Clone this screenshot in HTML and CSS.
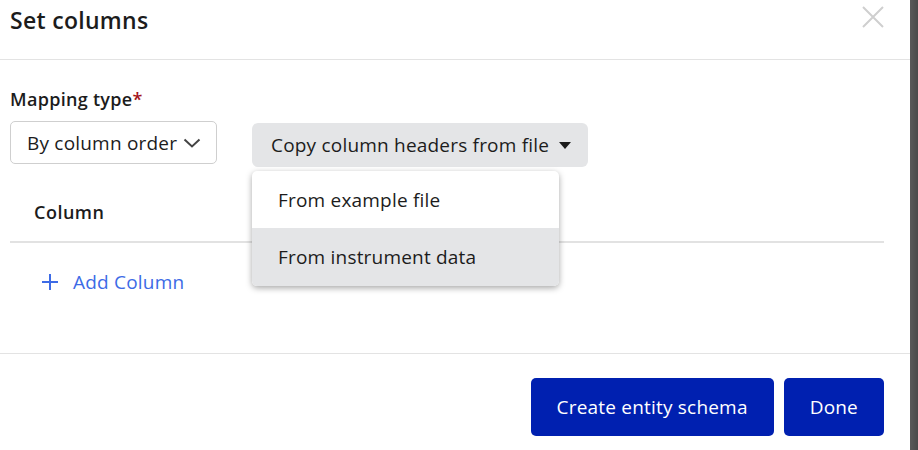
FILE: index.html
```html
<!DOCTYPE html>
<html lang="en">
<head>
<meta charset="UTF-8">
<meta name="viewport" content="width=device-width, initial-scale=1.0">
<title>Set columns</title>
<link rel="stylesheet" href="styles.css">
</head>
<body>

<div class="page">
  <div class="dialog">
    <div class="dialog-header">
      <h1>Set columns</h1>
      <button class="close" aria-label="Close">
        <svg width="22" height="22" viewBox="0 0 22 22"><path d="M1 1L21 21M21 1L1 21" stroke="#cfcfcf" stroke-width="2" fill="none"/></svg>
      </button>
    </div>

    <div class="dialog-body">
      <label class="field-label">Mapping type<span class="req">*</span></label>
      <div class="controls">
        <div class="select">
          By column order
          <svg width="18" height="10" viewBox="0 0 18 10"><path d="M1.5 1.5L9 8.5L16.5 1.5" stroke="#444" stroke-width="2" fill="none"/></svg>
        </div>
        <div class="copy-wrap">
          <button class="copy-btn">Copy column headers from file <span class="caret"></span></button>
          <ul class="menu">
            <li>From example file</li>
            <li class="active">From instrument data</li>
          </ul>
        </div>
      </div>

      <div class="table-head">Column</div>

      <button class="add-col">
        <svg width="18" height="18" viewBox="0 0 18 18"><path d="M9 1V17M1 9H17" stroke="#3d6be6" stroke-width="2" fill="none"/></svg>
        Add Column
      </button>
    </div>

    <div class="dialog-footer">
      <button class="primary">Create entity schema</button>
      <button class="primary">Done</button>
    </div>
  </div>
  <div class="overlay"></div>
</div>

</body>
</html>
```

FILE: styles.css
```css
body {
  margin: 0;
  font-family: "Open Sans", "Lato", sans-serif;
  color: #1c1c1c;
  background-color: #fff;
  letter-spacing: 0.2px;
}

.page {
  display: flex;
  height: 450px;
  overflow: hidden;
}

.dialog {
  width: 910px;
  background-color: #fff;
  display: flex;
  flex-direction: column;
}

.overlay {
  flex: 1;
  background: linear-gradient(to right, #5a5a5a, #4a4a4a);
}

.dialog-header {
  height: 59px;
  border-bottom: 1px solid #e3e3e3;
  display: flex;
  justify-content: space-between;
  align-items: flex-start;
  padding: 0 26px 0 10px;
}

.dialog-header h1 {
  margin: 4px 0 0;
  font-size: 23px;
  font-weight: 600;
  line-height: 32px;
  letter-spacing: 0.3px;
}

.close {
  border: none;
  background: none;
  padding: 0;
  margin-top: 6px;
  cursor: pointer;
}

.dialog-body {
  height: 293px;
  padding: 0 26px 0 10px;
}

.field-label {
  display: block;
  margin-top: 28px;
  font-size: 18px;
  font-weight: 600;
  line-height: 23px;
  letter-spacing: 0.3px;
}

.req {
  color: #a3131a;
}

.controls {
  display: flex;
  align-items: flex-start;
  gap: 35px;
  margin-top: 10px;
}

.select {
  width: 207px;
  height: 43px;
  box-sizing: border-box;
  border: 1px solid #cfcfcf;
  border-radius: 5px;
  padding: 0 15px 0 16px;
  display: flex;
  align-items: center;
  justify-content: space-between;
  font-size: 19px;
}

.copy-wrap {
  position: relative;
  margin-top: 2px;
}

.copy-btn {
  height: 44px;
  border: none;
  border-radius: 6px;
  background-color: #e4e5e7;
  font-family: inherit;
  font-size: 19px;
  letter-spacing: inherit;
  color: #1c1c1c;
  padding: 0 17px 0 19px;
  display: flex;
  align-items: center;
}

.caret {
  width: 0;
  height: 0;
  margin-left: 10px;
  border-left: 6px solid transparent;
  border-right: 6px solid transparent;
  border-top: 7px solid #1c1c1c;
}

.menu {
  position: absolute;
  top: 48px;
  left: 0;
  width: 307px;
  margin: 0;
  padding: 0;
  list-style: none;
  background-color: #fff;
  border-radius: 5px;
  box-shadow: 0 2px 6px rgba(0, 0, 0, 0.35);
  overflow: hidden;
  z-index: 2;
}

.menu li {
  height: 57px;
  display: flex;
  align-items: center;
  padding-left: 26px;
  font-size: 19px;
}

.menu li.active {
  height: 58px;
  background-color: #e4e5e7;
}

.table-head {
  margin-top: 24px;
  height: 50px;
  padding-left: 24px;
  border-bottom: 2px solid #e2e2e2;
  font-size: 18px;
  font-weight: 600;
  line-height: 42px;
  letter-spacing: 0.5px;
}

.add-col {
  margin-top: 26px;
  margin-left: 31px;
  display: flex;
  align-items: center;
  gap: 14px;
  border: none;
  background: none;
  padding: 0;
  font-family: inherit;
  font-size: 19px;
  letter-spacing: inherit;
  color: #3d6be6;
  cursor: pointer;
}

.dialog-footer {
  border-top: 1px solid #e3e3e3;
  display: flex;
  justify-content: flex-end;
  gap: 10px;
  padding: 24px 26px 0 0;
}

.primary {
  height: 58px;
  border: none;
  border-radius: 5px;
  background-color: #0020b0;
  color: #fff;
  font-family: inherit;
  font-size: 19px;
  letter-spacing: inherit;
  padding: 0 26px;
  cursor: pointer;
}
```
